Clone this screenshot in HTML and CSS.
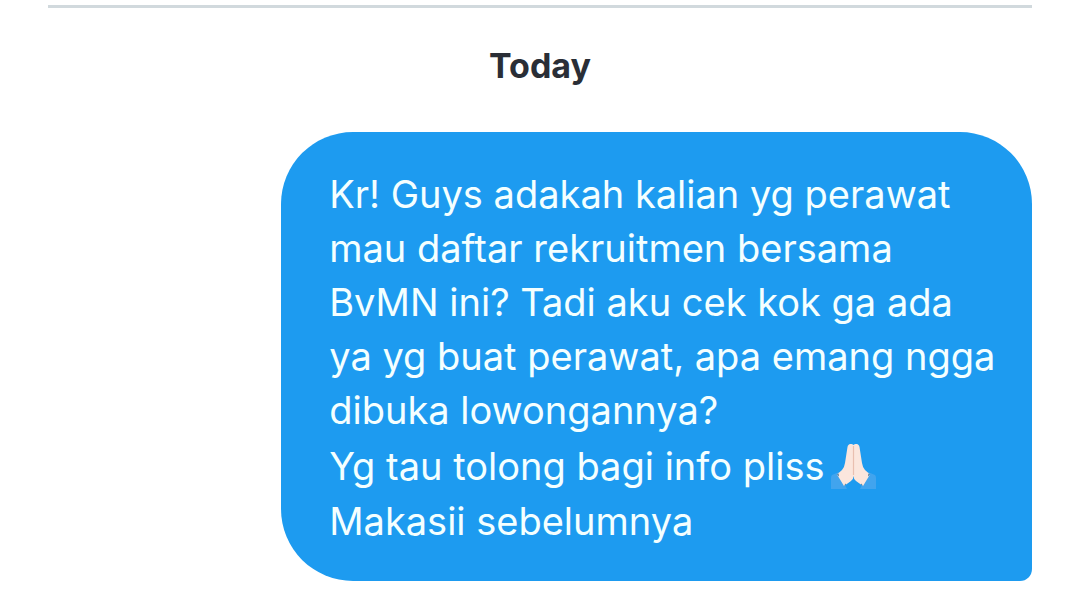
FILE: index.html
```html
<!DOCTYPE html>
<html lang="id">
<head>
<meta charset="utf-8">
<meta name="viewport" content="width=device-width, initial-scale=1">
<title>Messages</title>
<link rel="stylesheet" href="styles.css">
</head>
<body>
<main class="thread">
  <hr class="divider">
  <h2 class="day">Today</h2>
  <article class="bubble">
    <p class="message">Kr! Guys adakah kalian yg perawat<br>mau daftar rekruitmen bersama<br>BvMN ini? Tadi aku cek kok ga ada<br>ya yg buat perawat, apa emang ngga<br>dibuka lowongannya?</p>
    <p class="message closing">Yg tau tolong bagi info pliss<svg class="emoji" viewBox="0 0 45 45" role="img" aria-label="folded hands">
        <path fill="#41a4ee" d="M8 28 1 31Q0 32 0 34v11h16l-2-4zM37 28l7 3q1 1 1 3v11H29l2-4z"/>
        <path fill="#fbe6dd" d="M22.500 1C20-1 17 0 16.500 3L14 19q-.5 4-3 7l-5 4.500L13 42l7-5q2.500-2 2.500-5 0 3 2.500 5l7 5 7-11.500L34 26q-2.500-3-3-7L28.500 3C28 0 25-1 22.500 1z"/>
        <path fill="none" stroke="#e9bfb0" stroke-width="1.200" d="M22.500 2v29"/>
        <path fill="#3b7199" d="m6 30.500 1.500-1 .5 3zM39 30.500l-1.500-1-.5 3zM13 42l1.500-2.500.500 1zM32 42l-1.500-2.500-.5 1z"/>
      </svg><br>Makasii sebelumnya</p>
  </article>
</main>
</body>
</html>
```
FILE: styles.css
```css
* { box-sizing: border-box; }
body { margin: 0; background: #fff; font-family: Inter, "Liberation Sans", sans-serif; }
.thread { display: flex; flex-direction: column; padding: 5px 48px 22px; }
.divider { width: 100%; height: 3px; margin: 0; border: 0; background: #d1d9dd; }
.day { margin: 38px 0 0; font-size: 34px; line-height: 40px; font-weight: 700; text-align: center; color: #2a2e36; }
.bubble { align-self: flex-end; min-width: 76.300%; margin-top: 46px; padding: 35px 32px 32px 48px; border-radius: 72px 72px 12px 72px; background: #1d9bf0; color: #f4ffff; }
.message { margin: 0; font-size: 38px; line-height: 54px; white-space: nowrap; }
.closing { margin-top: 2px; line-height: 55px; }
.emoji { width: 45px; height: 45px; margin-left: 6px; vertical-align: -9px; }
```
